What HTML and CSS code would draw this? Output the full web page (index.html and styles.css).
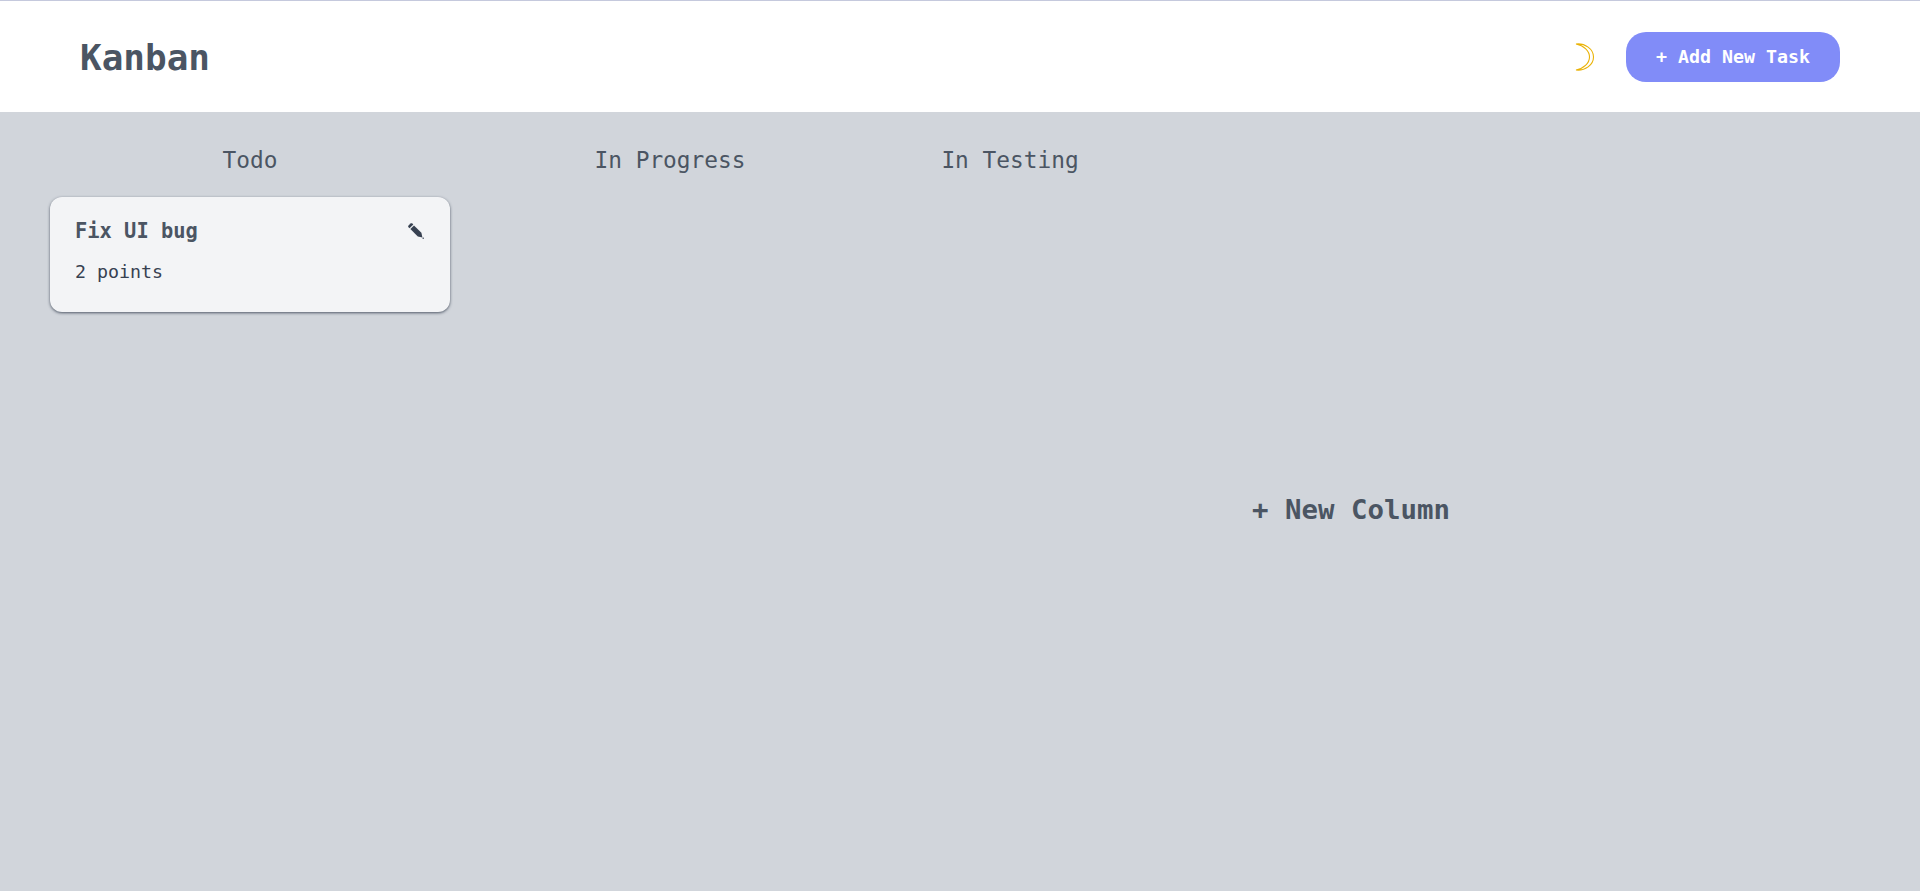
FILE: index.html
```html
<!DOCTYPE html>
<html lang="en">
<head>
    <meta charset="UTF-8">
    <meta name="viewport" content="width=device-width, initial-scale=1.0">
    <title>Kanban</title>
    <link rel="stylesheet" href="styles.css">
</head>
<body>
    <header class="topbar">
        <h1 class="logo">Kanban</h1>
        <div class="topbar-actions">
            <button class="theme-toggle" aria-label="Toggle theme">
                <svg width="20" height="28" viewBox="0 0 20 28" fill="none" stroke="#eab308" stroke-width="1.1">
                    <path d="M1 1C10 0 18.500 6 18.500 14C18.500 22 10 28 1 27C9 25.500 14.500 20 14.500 14C14.500 8 9 2.500 1 1Z"/>
                </svg>
            </button>
            <button class="add-task">+ Add New Task</button>
        </div>
    </header>

    <main class="board">
        <section class="column column-first">
            <h2 class="column-title">Todo</h2>
            <div class="card">
                <div class="card-head">
                    <h3 class="card-title">Fix UI bug</h3>
                    <svg class="edit-icon" width="16" height="16" viewBox="0 0 16 16">
                        <path fill="#374151" d="M0.500 2.500L2.500 0.500C3 0 3.800 0 4.300 0.500L5.300 1.500L1.500 5.300L0.500 4.300C0 3.800 0 3 0.500 2.500Z"/>
                        <path fill="#374151" d="M6 2.400L13.400 9.800L14.400 14.400L9.800 13.400L2.400 6Z"/>
                        <path fill="#6b7280" d="M14.500 14.500H16V16H14.500Z"/>
                    </svg>
                </div>
                <p class="card-points">2 points</p>
            </div>
        </section>
        <section class="column">
            <h2 class="column-title">In Progress</h2>
        </section>
        <section class="column">
            <h2 class="column-title">In Testing</h2>
        </section>
        <section class="new-column">
            <span>+ New Column</span>
        </section>
    </main>
</body>
</html>
```

FILE: styles.css
```css
html, body {
    height: 100%;
}
body {
    margin: 0;
    display: flex;
    flex-direction: column;
    font-family: "DejaVu Sans Mono", "Liberation Mono", monospace;
    color: #4b5563;
    background-color: #d1d5db;
    overflow: hidden;
}
.topbar {
    height: 111px;
    display: flex;
    justify-content: space-between;
    align-items: center;
    padding: 0 80px;
    background-color: white;
    border-top: 1px solid #c5c9dd;
}
.logo {
    margin: 0;
    padding-top: 2px;
    font-size: 36px;
    font-weight: bold;
}
.topbar-actions {
    display: flex;
    align-items: center;
    gap: 31px;
}
.theme-toggle {
    display: flex;
    padding: 0;
    border: none;
    background: none;
}
.add-task {
    width: 214px;
    height: 50px;
    padding: 0;
    border: none;
    border-radius: 20px;
    background-color: #818cf8;
    color: white;
    font-family: inherit;
    font-size: 18.300px;
    font-weight: bold;
}
.board {
    flex: 1;
    display: grid;
    grid-template-columns: 500px 340px 340px 342px;
}
.column-first {
    padding: 0 50px;
}
.column-title {
    margin: 0;
    height: 85px;
    line-height: 97px;
    text-align: center;
    font-size: 22.800px;
    font-weight: normal;
}
.card {
    height: 115px;
    box-sizing: border-box;
    padding: 22px 26px 0 25px;
    border-radius: 12px;
    background-color: #f3f4f6;
    box-shadow: 0 1px 3px 0 rgba(55, 65, 81, 0.85);
}
.card-head {
    display: flex;
    justify-content: space-between;
    align-items: center;
}
.card-title {
    margin: 0;
    font-size: 20.400px;
    font-weight: bold;
}
.card-points {
    margin: 18px 0 0;
    font-size: 18.300px;
    color: #374151;
}
.new-column {
    display: flex;
    justify-content: center;
    align-items: center;
    padding-top: 16px;
    font-size: 27.400px;
    font-weight: bold;
}
```
